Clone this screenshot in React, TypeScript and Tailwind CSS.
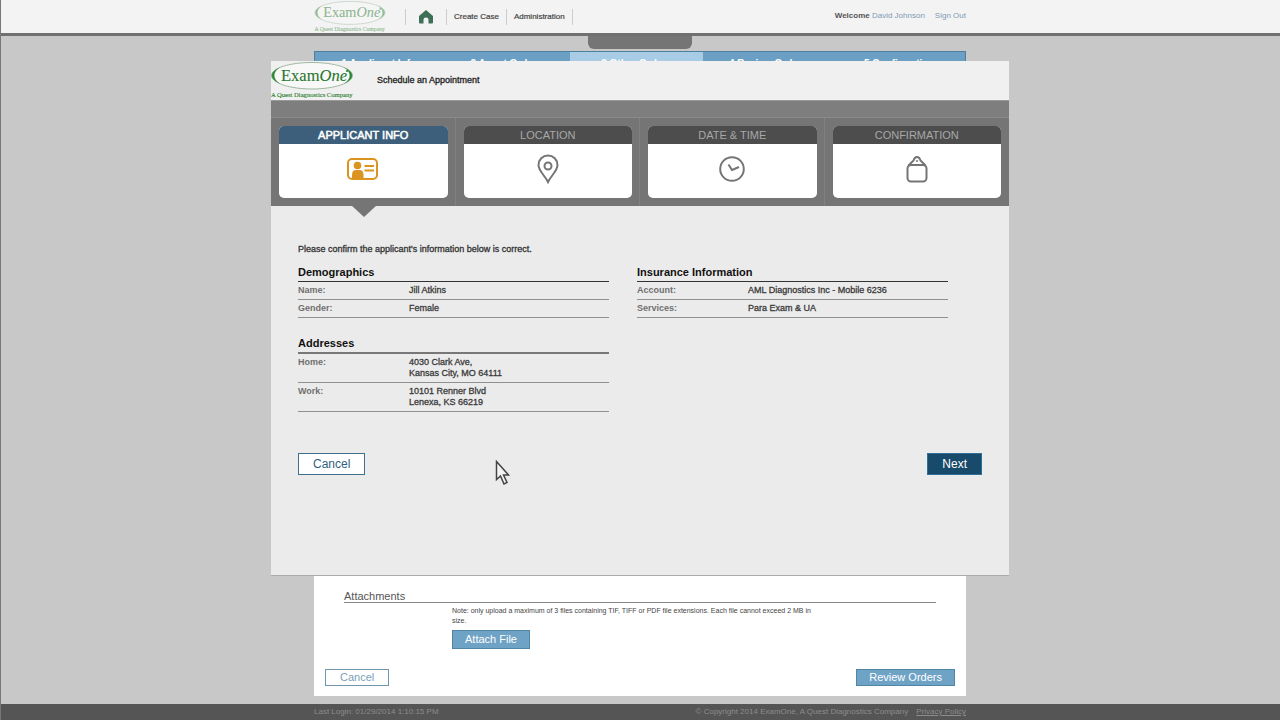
import { clsx } from 'clsx';
import type { ReactNode } from 'react';

type Row = { label: string; lines: string[] };

const orderTabs = ['1 Applicant Info', '2 Agent Orders', '3 Other Orders', '4 Review Orders', '5 Confirmation'];

const demographics: Row[] = [
  { label: 'Name:', lines: ['Jill Atkins'] },
  { label: 'Gender:', lines: ['Female'] },
];

const addresses: Row[] = [
  { label: 'Home:', lines: ['4030 Clark Ave,', 'Kansas City, MO 64111'] },
  { label: 'Work:', lines: ['10101 Renner Blvd', 'Lenexa, KS 66219'] },
];

const insurance: Row[] = [
  { label: 'Account:', lines: ['AML Diagnostics Inc - Mobile 6236'] },
  { label: 'Services:', lines: ['Para Exam & UA'] },
];

function Logo({ className }: { className?: string }) {
  return (
    <svg viewBox="0 0 82 37" className={className} role="img" aria-label="ExamOne, A Quest Diagnostics Company">
      <path
        d="M41 0.500C19 0.500 0.500 6 0.500 13.500S19 27 41 27s40.500-6 40.500-13.500S63 0.500 41 0.500Z"
        fill="#f8f8f8"
        stroke="#8aa88a"
        strokeWidth="0.8"
      />
      <path d="M9 5.500C-2 10-2 17 9 21.500C1.500 17 1.500 10 9 5.500Z" fill="#2f8a35" />
      <path d="M73 5.500C84 10 84 17 73 21.500C80.500 17 80.500 10 73 5.500Z" fill="#2f8a35" />
      <text x="10" y="18.500" fontFamily="Liberation Serif, serif" fontSize="16.500" fill="#27772d" stroke="#27772d" strokeWidth="0.1">
        Exam<tspan fontStyle="italic">One</tspan>
      </text>
      <circle cx="76" cy="9" r="1" fill="#27772d" />
      <text x="0" y="34.500" fontFamily="Liberation Serif, serif" fontSize="6.600" fill="#1f7a2a" stroke="#1f7a2a" strokeWidth="0.1">
        A Quest Diagnostics Company
      </text>
    </svg>
  );
}

function HomeIcon() {
  return (
    <svg viewBox="0 0 14 14" className="h-3.5 w-3.5">
      <path d="M7 0L0 6v6.500q0 1 1 1h3.500V9.500q0-2 2.500-2t2.500 2v4H13q1 0 1-1V6Z" fill="#3f6f56" />
    </svg>
  );
}

function IdCardIcon() {
  return (
    <svg viewBox="0 0 32 24" className="h-6 w-8" fill="none" stroke="#dc9420" strokeWidth="2">
      <rect x="1" y="2" width="29" height="20" rx="4" />
      <circle cx="10.500" cy="8.500" r="3.800" fill="#dc9420" stroke="none" />
      <path d="M5 21v-3q0-5 4-5h3.500q4 0 4 5v3Z" fill="#dc9420" stroke="none" />
      <path d="M17.500 9h9.500M17.500 13.500h9.500" />
    </svg>
  );
}

function PinIcon() {
  return (
    <svg viewBox="0 0 22 30" className="h-[30px] w-[22px]" fill="none" stroke="#757575" strokeWidth="2">
      <path d="M11 28C8 21.500 1.500 17 1.500 11a9.500 9.500 0 0 1 19 0C20.500 17 14 21.500 11 28Z" />
      <circle cx="11" cy="12" r="3.500" />
    </svg>
  );
}

function ClockIcon() {
  return (
    <svg viewBox="0 0 26 26" className="h-[26px] w-[26px]" fill="none" stroke="#757575" strokeWidth="2">
      <circle cx="13" cy="13" r="11.800" />
      <path d="M9.500 8.500L13 14L20 11" />
    </svg>
  );
}

function BagIcon() {
  return (
    <svg viewBox="0 0 22 28" className="h-7 w-[22px]" fill="none" stroke="#757575" strokeWidth="2">
      <rect x="1.500" y="10" width="19" height="16.500" rx="3.500" />
      <path d="M2.500 10.500L7.500 5.500q1-3.500 3.500-3.500t3.500 3.500l5 5" />
      <circle cx="11" cy="6" r="1" fill="#757575" stroke="none" />
    </svg>
  );
}

function InfoTable({ title, rows, thick }: { title: string; rows: Row[]; thick?: boolean }) {
  return (
    <table className="w-full text-left text-[9px] leading-[11px] text-[#3a3a3a]">
      <caption
        className={clsx(
          'text-left text-[11px] leading-[18px] font-bold text-[#111]',
          thick ? 'border-b-2 border-[#777]' : 'border-b border-[#333]',
        )}
      >
        {title}
      </caption>
      <tbody>
        {rows.map((row) => (
          <tr key={row.label} className="border-b border-[#909090] align-top">
            <th scope="row" className="w-[111px] py-[3px] font-bold text-[#707070]">
              {row.label}
            </th>
            <td className="py-[3px] [-webkit-text-stroke:0.3px_#3a3a3a]">
              {row.lines.map((line) => (
                <div key={line}>{line}</div>
              ))}
            </td>
          </tr>
        ))}
      </tbody>
    </table>
  );
}

function Step({ label, active, children }: { label: string; active?: boolean; children: ReactNode }) {
  return (
    <li className="relative not-last:after:absolute not-last:after:-inset-y-2 not-last:after:-right-2 not-last:after:w-px not-last:after:bg-[#808080]">
      <div className="overflow-hidden rounded-[5px] bg-white">
        <div
          className={clsx(
            'h-[18px] text-center text-[11px] leading-[18px]',
            active
              ? 'bg-[#3d5f7c] text-white [-webkit-text-stroke:0.5px_white]'
              : 'bg-[#4d4d4d] text-[#a8a8a8]',
          )}
        >
          {label}
        </div>
        <div className="flex h-[54px] items-center justify-center pb-1">{children}</div>
      </div>
      {active && (
        <svg viewBox="0 0 26 12" className="absolute top-full left-1/2 mt-[7px] h-3 w-[26px] -translate-x-3">
          <path d="M0 0h26L13 12Z" fill="#757575" />
        </svg>
      )}
    </li>
  );
}

function AppointmentDialog() {
  return (
    <section
      role="dialog"
      aria-label="Schedule an Appointment"
      className="absolute inset-x-0 top-[61px] mx-auto max-w-[738px] border-b border-[#aaa] bg-[#ebebeb] pb-[100px]"
    >
      <header className="flex h-[39px] items-center gap-6 bg-[#f0f0f0]">
        <Logo className="h-[37px] w-[82px]" />
        <h1 className="text-[9px] text-[#222] [-webkit-text-stroke:0.3px_#222]">Schedule an Appointment</h1>
      </header>
      <div className="h-[18px] border-t border-b border-t-[#999] border-b-[#8a8a8a] bg-[#7e7e7e]" />
      <ol className="grid grid-cols-4 gap-4 bg-[#757575] p-2">
        <Step label="APPLICANT INFO" active>
          <IdCardIcon />
        </Step>
        <Step label="LOCATION">
          <PinIcon />
        </Step>
        <Step label="DATE & TIME">
          <ClockIcon />
        </Step>
        <Step label="CONFIRMATION">
          <BagIcon />
        </Step>
      </ol>

      <div className="px-[27px] pt-9">
        <p className="text-[9px] leading-[14px] text-[#333] [-webkit-text-stroke:0.3px_#333]">
          Please confirm the applicant's information below is correct.
        </p>
        <div className="mt-[7px] mr-[34px] grid grid-cols-2 items-start gap-7">
          <div className="flex flex-col gap-4">
            <InfoTable title="Demographics" rows={demographics} />
            <InfoTable title="Addresses" rows={addresses} thick />
          </div>
          <InfoTable title="Insurance Information" rows={insurance} />
        </div>
        <div className="mt-[41px] flex justify-between">
          <button type="button" className="h-[22px] border border-[#3f6f8f] bg-white px-[14px] text-xs text-[#2f5f80]">
            Cancel
          </button>
          <button type="button" className="h-[22px] border border-[#2f7099] bg-[#174a6b] px-[14px] text-xs text-white">
            Next
          </button>
        </div>
      </div>
    </section>
  );
}

export default function App() {
  return (
    <div className="relative flex min-h-screen flex-col bg-[#c8c8c8] font-['Liberation_Sans',Arial,sans-serif] before:absolute before:inset-y-0 before:left-0 before:w-px before:bg-[#777]">
      <header className="h-9 border-b-[3px] border-[#707070] bg-[#f3f3f3]">
        <div className="mx-auto flex h-full max-w-[652px] items-center">
          <Logo className="h-8 w-[72px] opacity-50" />
          <nav className="ml-[19px] flex h-4 items-center text-[8px] text-[#444] [-webkit-text-stroke:0.2px_#444]">
            <a href="#home" aria-label="Home" className="flex h-4 items-center border-x border-[#ccc] px-[13px]">
              <HomeIcon />
            </a>
            <a href="#create" className="border-r border-[#ccc] px-[7px] leading-4">
              Create Case
            </a>
            <a href="#admin" className="border-r border-[#ccc] px-[7px] leading-4">
              Administration
            </a>
          </nav>
          <div className="ml-auto flex gap-2.5 pb-0.5 text-[8px] text-[#7d9ab5]">
            <span>
              <b className="text-[#555]">Welcome</b> <a href="#profile">David Johnson</a>
            </span>
            <a href="#signout">Sign Out</a>
          </div>
        </div>
      </header>

      <div className="mx-auto h-[13px] w-[104px] rounded-b-md bg-[#757575]" />

      <main className="mx-auto mt-0.5 mb-2 flex w-full max-w-[652px] flex-1 flex-col justify-between bg-white">
        <ol className="grid grid-cols-[128fr_128fr_133fr_131fr_132fr] border border-[#4f7f9f] text-center text-[10px] leading-6 font-bold text-white">
          {orderTabs.map((tab, i) => (
            <li key={tab} className={i === 2 ? 'bg-[#a9cce6]' : 'bg-[#6b9fc3]'}>
              {tab}
            </li>
          ))}
        </ol>
        <section className="px-[11px] pb-2.5">
          <div className="px-[19px]">
            <h2 className="border-b border-[#888] text-[11px] leading-3 text-[#555]">Attachments</h2>
            <div className="mt-[3px] ml-[108px] max-w-[370px]">
              <p className="text-[7px] leading-[10px] text-[#444]">
                Note: only upload a maximum of 3 files containing TIF, TIFF or PDF file extensions. Each file cannot
                exceed 2 MB in size.
              </p>
              <button type="button" className="mt-0.5 h-[19px] border border-[#4f86a8] bg-[#6fa3c6] px-3 text-[11px] leading-[17px] text-white">
                Attach File
              </button>
            </div>
          </div>
          <div className="mt-[19px] flex justify-between text-[11px] leading-[15px]">
            <button type="button" className="border border-[#6f96ac] bg-white px-[14px] text-[#7ba0b8]">
              Cancel
            </button>
            <button type="button" className="border border-[#4f86a8] bg-[#6fa3c6] px-3 text-white">
              Review Orders
            </button>
          </div>
        </section>
      </main>

      <footer className="bg-[#555] text-[8px] leading-4 text-[#8c8c8c]">
        <div className="mx-auto flex max-w-[652px] gap-2">
          <span className="mr-auto">Last Login: 01/29/2014 1:10:15 PM</span>
          <span>© Copyright 2014 ExamOne, A Quest Diagnostics Company</span>
          <a href="#privacy" className="underline">
            Privacy Policy
          </a>
        </div>
      </footer>

      <AppointmentDialog />

      {/* mouse pointer */}
      <svg viewBox="0 0 16 26" className="pointer-events-none absolute top-[460px] left-[495px] h-[26px] w-4">
        <path
          d="M1.500 1.500v18l4-3.500l3.500 8l3-1.500l-3.500-7.500h5Z"
          fill="#f4f4f4"
          stroke="#444"
          strokeWidth="1.500"
        />
      </svg>
    </div>
  );
}
